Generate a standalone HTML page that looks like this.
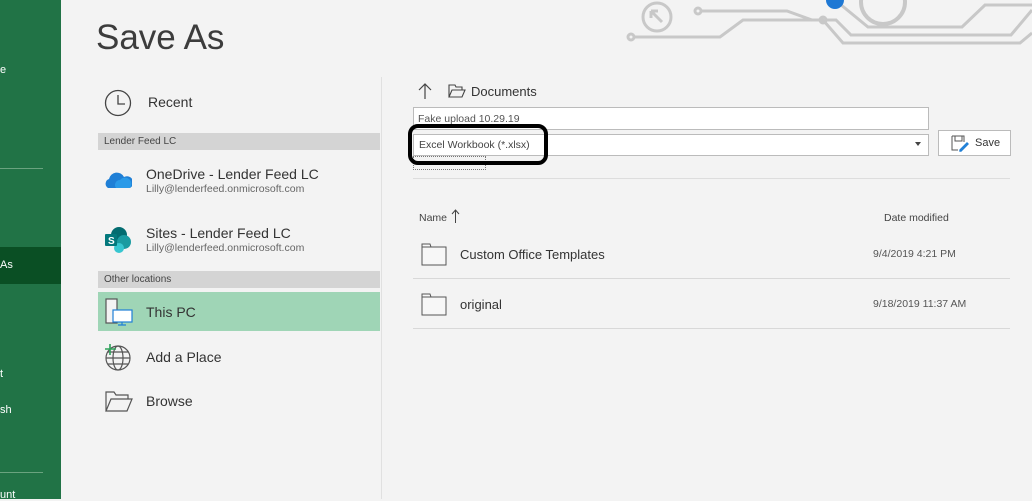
<!DOCTYPE html>
<html><head><meta charset="utf-8"><style>
*{margin:0;padding:0;box-sizing:border-box}
body{width:1032px;height:499px;overflow:hidden;background:#f3f3f3;font-family:"Liberation Sans",sans-serif;position:relative;color:#333}
.a{position:absolute;white-space:nowrap}
.side{left:0;top:0;width:61px;height:499px;background:#217346}
.st{color:#fff;font-size:11px;left:0}
</style></head><body>
<div class="a side"></div>
<div class="a" style="left:0;top:247px;width:61px;height:37px;background:#0a4f24"></div>
<div class="a" style="left:0;top:168px;width:43px;height:1px;background:#6aa37f"></div>
<div class="a" style="left:0;top:472px;width:43px;height:1px;background:#6aa37f"></div>
<div class="a st" style="top:64px">e</div>
<div class="a st" style="top:259px">As</div>
<div class="a st" style="top:368px">t</div>
<div class="a st" style="top:404px">sh</div>
<div class="a st" style="top:489px">unt</div>

<svg class="a" style="left:600px;top:0" width="432" height="50" fill="none" stroke="#c8c8c8" stroke-width="3">
<circle cx="57" cy="17" r="14"/><path d="M52 12l10 10M51 11h7M51 11v7" stroke-width="3"/>
<circle cx="31" cy="37" r="3"/><path d="M34 37h86l23-17h80l20 23h177l12-10"/>
<circle cx="98" cy="11" r="3"/><path d="M101 11h86l25 9h8"/>
<circle cx="223" cy="20" r="3"/><path d="M226 20h10l15 15h160l21-25"/>
<path d="M235 0l33 27h94l23-22h47"/>
<circle cx="283" cy="2" r="22" stroke-width="4"/>
<circle cx="235" cy="0" r="9" fill="#1e78d4" stroke="none"/>
</svg>

<div class="a" style="left:96px;top:18px;font-size:35px;color:#3c3c3c">Save As</div>
<div class="a" style="left:381px;top:77px;width:1px;height:422px;background:#e0e0e0"></div>

<svg class="a" style="left:104px;top:89px" width="28" height="28" fill="none" stroke="#444" stroke-width="1.3"><circle cx="14" cy="14" r="12.5"/><path d="M14 6v9h7"/></svg>
<div class="a" style="left:148px;top:94px;font-size:14px">Recent</div>
<div class="a" style="left:98px;top:133px;width:282px;height:17px;background:#d4d4d4;font-size:10px;padding:3px 6px;color:#444">Lender Feed LC</div>

<svg class="a" style="left:104px;top:170px" width="28" height="20"><path d="M4 18a5 5 0 0 1 1-9 8 8 0 0 1 15-2 6 6 0 0 1 6 11z" fill="#1f7fd6"/><path d="M12 18a5 5 0 0 1 4-8 6 6 0 0 1 10 8z" fill="#2a9ae8"/></svg>
<div class="a" style="left:146px;top:166px;font-size:14px">OneDrive - Lender Feed LC</div>
<div class="a" style="left:146px;top:183px;font-size:10.5px;color:#666">Lilly@lenderfeed.onmicrosoft.com</div>

<svg class="a" style="left:104px;top:226px" width="28" height="28"><circle cx="15" cy="9" r="8" fill="#036c70"/><circle cx="20" cy="16" r="7" fill="#1a9ba1"/><circle cx="15" cy="22" r="5" fill="#37c6d0"/><rect x="1" y="8" width="12" height="12" rx="1" fill="#03787c"/><text x="4" y="18" font-size="10" fill="#fff" font-family="Liberation Sans" font-weight="bold">S</text></svg>
<div class="a" style="left:146px;top:225px;font-size:14px">Sites - Lender Feed LC</div>
<div class="a" style="left:146px;top:242px;font-size:10.5px;color:#666">Lilly@lenderfeed.onmicrosoft.com</div>

<div class="a" style="left:98px;top:271px;width:282px;height:17px;background:#d4d4d4;font-size:10px;padding:3px 6px;color:#444">Other locations</div>
<div class="a" style="left:98px;top:292px;width:282px;height:39px;background:#9fd5b6"></div>
<svg class="a" style="left:104px;top:298px" width="30" height="28" fill="none" stroke="#555" stroke-width="1.2"><rect x="2" y="1" width="11" height="24" fill="#f3f3f3"/><rect x="9" y="12" width="19" height="12" fill="#fff" stroke="#1f7fd6"/><path d="M18 24v3M14 27h8" stroke="#1f7fd6"/></svg>
<div class="a" style="left:146px;top:304px;font-size:14px">This PC</div>

<svg class="a" style="left:103px;top:342px" width="30" height="30" fill="none" stroke="#555" stroke-width="1.2"><circle cx="15" cy="16" r="12"/><ellipse cx="15" cy="16" rx="5" ry="12"/><path d="M3 16h24M5 10h20M5 22h20"/><path d="M7 2v11M2 7h11" stroke="#2ea35b" stroke-width="1.6"/></svg>
<div class="a" style="left:146px;top:349px;font-size:14px">Add a Place</div>
<svg class="a" style="left:104px;top:390px" width="30" height="22" fill="none" stroke="#555" stroke-width="1.2"><path d="M2 21V2h8l2 3h12v4M2 21l5-12h21l-5 12z"/></svg>
<div class="a" style="left:146px;top:393px;font-size:14px">Browse</div>

<svg class="a" style="left:418px;top:82px" width="14" height="18" fill="none" stroke="#444" stroke-width="1.2"><path d="M7 17V2M1 8l6-6 6 6"/></svg>
<svg class="a" style="left:448px;top:84px" width="18" height="14" fill="none" stroke="#444" stroke-width="1.1"><path d="M1 13V1h6l1 2h6v3M1 13l3-7h13l-3 7z"/></svg>
<div class="a" style="left:471px;top:84px;font-size:13px">Documents</div>

<div class="a" style="left:413px;top:107px;width:516px;height:23px;background:#fff;border:1px solid #bbb;font-size:10.5px;padding:5px 4px;color:#555">Fake upload 10.29.19</div>
<div class="a" style="left:413px;top:134px;width:516px;height:22px;background:#fff;border:1px solid #bbb;font-size:10.5px;padding:4px 5px;color:#444">Excel Workbook (*.xlsx)</div>
<div class="a" style="left:915px;top:142px;width:0;height:0;border-left:3px solid transparent;border-right:3px solid transparent;border-top:4px solid #444"></div>
<div class="a" style="left:938px;top:130px;width:73px;height:26px;background:#fff;border:1px solid #bbb;font-size:11px;padding:6px 0 0 36px">Save</div>
<svg class="a" style="left:951px;top:135px" width="18" height="17" fill="none" stroke="#555" stroke-width="1"><path d="M1 1h12v6M1 1v14h6M4 1v5h7V1"/><path d="M9 15l7-7 1 1-7 7h-1z" stroke="#1f7fd6" stroke-width="1.4"/></svg>
<div class="a" style="left:413px;top:156px;width:73px;height:14px;border:1px dotted #777"></div>
<div class="a" style="left:408px;top:124px;width:140px;height:41px;border:4px solid #000;border-radius:10px"></div>
<div class="a" style="left:413px;top:178px;width:597px;height:1px;background:#ddd"></div>

<div class="a" style="left:419px;top:212px;font-size:10.5px;color:#444">Name</div>
<svg class="a" style="left:451px;top:209px" width="9" height="15" fill="none" stroke="#444" stroke-width="1"><path d="M4.5 14V1M1 5l3.5-4 3.5 4"/></svg>
<div class="a" style="left:884px;top:212px;font-size:10.5px;color:#444">Date modified</div>

<svg class="a" style="left:421px;top:243px" width="26" height="23" fill="#f7f7f7" stroke="#555" stroke-width="1"><path d="M1 22V1h8l1 3h15v18z"/><path d="M1 4h9" fill="none"/></svg>
<div class="a" style="left:460px;top:247px;font-size:13px">Custom Office Templates</div>
<div class="a" style="left:873px;top:248px;font-size:10.5px;color:#555">9/4/2019 4:21 PM</div>
<div class="a" style="left:413px;top:278px;width:597px;height:1px;background:#d8d8d8"></div>
<svg class="a" style="left:421px;top:293px" width="26" height="23" fill="#f7f7f7" stroke="#555" stroke-width="1"><path d="M1 22V1h8l1 3h15v18z"/><path d="M1 4h9" fill="none"/></svg>
<div class="a" style="left:460px;top:297px;font-size:13px">original</div>
<div class="a" style="left:873px;top:298px;font-size:10.5px;color:#555">9/18/2019 11:37 AM</div>
<div class="a" style="left:413px;top:328px;width:597px;height:1px;background:#d8d8d8"></div>
</body></html>
